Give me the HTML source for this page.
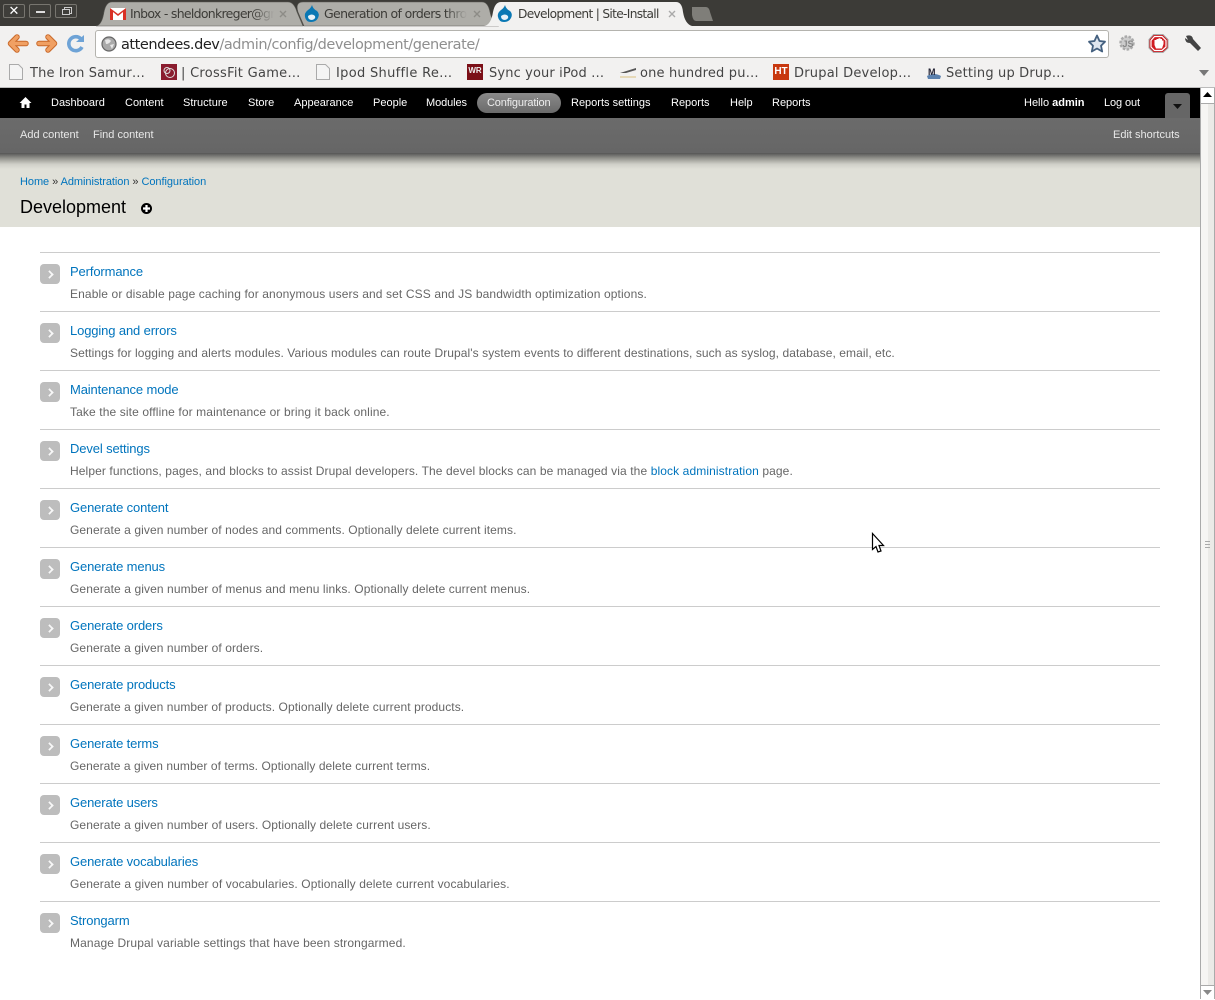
<!DOCTYPE html>
<html><head><meta charset="utf-8"><title>Development | Site-Install</title>
<style>
html,body{margin:0;padding:0;width:1215px;height:1000px;overflow:hidden;background:#fff}
body{position:relative;font-family:"Liberation Sans",sans-serif}
.a{position:absolute;white-space:nowrap}
.u{font-family:"DejaVu Sans",sans-serif;font-size:12.5px;line-height:16px}
.n{color:#fff;font-size:11px;line-height:14px;top:96px}
.s{color:#e8e8e8;font-size:11px;line-height:14px;top:128px}
.bm{top:66px;color:#444;font-size:13px}
.t{font-size:13px;line-height:16px;color:#0074bd;letter-spacing:-.13px}
.d{font-size:12px;line-height:16px;color:#666}
.l{left:40px;width:1120px;height:1px;background:#ccc}
.ic{left:40px;width:20px;height:20px;border-radius:4px;background:#bdbdbd}
.ic:after{content:"";position:absolute;left:5.5px;top:6.5px;width:5px;height:5px;border-top:2px solid #f8f8f8;border-right:2px solid #f8f8f8;transform:rotate(45deg) scale(.85)}
a{color:#0074bd;text-decoration:none}
svg{position:absolute}
.w{top:4px;width:20px;height:12px;border:1px solid #77756f;border-radius:2px;background:#3f3e3a}
.fade{-webkit-mask-image:linear-gradient(90deg,#000 85%,transparent)}
</style></head><body>
<div class="a" style="left:0;top:0;width:1215px;height:26px;background:#3c3b37"></div>
<div class="a" style="left:0;top:26px;width:1215px;height:61px;background:#f2f1f0"></div>
<div class="a" style="left:0;top:87px;width:1215px;height:1px;background:#bbb"></div>

<!-- window buttons -->
<div class="a w" style="left:3px;color:#fff;font:13px/13px 'DejaVu Sans';text-align:center">✕</div>
<div class="a w" style="left:29px"><div class="a" style="left:6px;top:6px;width:9px;height:2px;background:#ddd"></div></div>
<div class="a w" style="left:55px"><div class="a" style="left:8px;top:2px;width:6px;height:5px;border:1px solid #ccc"></div><div class="a" style="left:6px;top:4px;width:6px;height:4px;border:1px solid #ccc;background:#3f3e3a"></div></div>

<!-- tabs -->
<svg style="left:0;top:0" width="740" height="27" viewBox="0 0 740 27">
<path d="M96 26 Q102 25 104 12 Q106 2 112 2 L288 2 Q294 2 297 12 L303 26Z" fill="#aeada8" stroke="#5a5954" stroke-width=".6"/>
<path d="M298 12 Q295 2 303 2 L482 2 Q488 2 490 12 Q492 22 498 26 L304 26Z" fill="#aeada8" stroke="#5a5954" stroke-width=".6"/>
<path d="M484 26 Q491 25 493 12 Q495 2 501 2 L676 2 Q682 2 683 12 Q685 24 692 26Z" fill="#f2f1f0"/>
<path d="M692 7 L706 7 Q709 7 710 12 L713 21 L696 21 Q693 21 692 15Z" fill="#7f7e79"/>
<!-- gmail -->
<rect x="110" y="8" width="16" height="12" fill="#fff"/>
<path d="M110 8 L118 14 L126 8 L126 20 L123 20 L123 12 L118 16 L113 12 L113 20 L110 20Z" fill="#d93025"/>
<!-- drupal drops -->
<path d="M312 5 Q313 9 317 11 Q320 14 318 18 Q316 22 311 22 Q306 22 305 17 Q304 13 308 10 Q311 8 312 5Z" fill="#0a78b4"/>
<path d="M308 16 Q312 13 315 16 Q316 19 312 20 Q308 20 308 16Z" fill="#e8f2f8"/>
<path d="M505 5 Q506 9 510 11 Q513 14 511 18 Q509 22 504 22 Q499 22 498 17 Q497 13 501 10 Q504 8 505 5Z" fill="#0a78b4"/>
<path d="M501 16 Q505 13 508 16 Q509 19 505 20 Q501 20 501 16Z" fill="#e8f2f8"/>
<g stroke="#8d8c87" stroke-width="1.4"><path d="M280 11l6 6m0-6l-6 6M474 11l6 6m0-6l-6 6"/></g>
<path d="M669 11l6 6m0-6l-6 6" stroke="#aaa" stroke-width="1.4"/>
</svg>
<div class="a u fade" style="left:130px;top:6px;width:144px;overflow:hidden;color:#3c3b37;letter-spacing:-.72px">Inbox - sheldonkreger@gn</div>
<div class="a u fade" style="left:324px;top:6px;width:143px;overflow:hidden;color:#3c3b37;letter-spacing:-.65px">Generation of orders thro</div>
<div class="a u" style="left:518px;top:6px;color:#3c3b37;font-size:12.2px;letter-spacing:-.68px">Development | Site-Install</div>

<!-- toolbar icons -->
<svg style="left:0;top:26px" width="95" height="36" viewBox="0 0 95 36">
<g fill="none" stroke-linecap="round" stroke-linejoin="round">
<path d="M26 17.500 H12 M17 11 L10.500 17.500 L17 24 M39 17.500 H53 M48 11 L54.500 17.500 L48 24" stroke="#c9692a" stroke-width="5.500"/>
<path d="M26 17.500 H12 M17 11 L10.500 17.500 L17 24 M39 17.500 H53 M48 11 L54.500 17.500 L48 24" stroke="#f0a063" stroke-width="3.500"/>
</g>
<path d="M81 13 A7 7 0 1 0 82 21" fill="none" stroke="#6ea3d6" stroke-width="3.6"/>
<path d="M76 16 L84 16 L84 9Z" fill="#6ea3d6"/>
</svg>
<div class="a" style="left:95px;top:30px;width:1012px;height:26px;border:1px solid #b4b3ae;border-radius:3px;background:#fff"></div>
<svg style="left:100px;top:35px" width="18" height="18" viewBox="0 0 18 18"><circle cx="9" cy="9" r="7" fill="#aaa" stroke="#666" stroke-width="1.2"/><path d="M5 5 Q9 3 11 6 Q9 9 6 9Z M10 10 L14 9 L12 14Z" fill="#e8e8e8"/></svg>
<div class="a" style="left:121px;top:36px;font:14.5px/18px 'DejaVu Sans',sans-serif;letter-spacing:-.45px;color:#8f8f8f"><span style="color:#222">attendees.dev</span>/admin/config/development/generate/</div>
<svg style="left:1085px;top:31px" width="130" height="26" viewBox="0 0 130 26">
<path d="M12 4.500 L14.500 10 L20 10.700 L16 14.700 L17.200 20.500 L12 17.500 L6.800 20.500 L8 14.700 L4 10.700 L9.500 10Z" fill="#dfe6ef" stroke="#44607f" stroke-width="1.800" stroke-linejoin="round"/>
<circle cx="42" cy="12" r="6.500" fill="#ccc" stroke="#aaa" stroke-width="2.400" stroke-dasharray="2.500 1.500"/>
<text x="37.500" y="16" font-family="Liberation Sans" font-size="9" font-weight="bold" fill="#888">JS</text>
<path d="M68.500 3.500 L78 3.500 L83 8.500 L83 17 L78 21.500 L68.500 21.500 L64 17 L64 8.500Z" fill="#c8161c" stroke="#a9a9a9" stroke-width="1"/>
<path d="M69.500 5.500 L77 5.500 L81 9.500 L81 16 L77 19.500 L69.500 19.500 L66 16 L66 9.500Z" fill="#d01c22" stroke="#fff" stroke-width="1.200"/>
<path d="M69.500 9 V14 L71 17.500 H77 L78.500 13 V9.500 H77 V8 H75.500 V7.300 H73.500 V8 H71.500 V9Z" fill="#fff"/>
<path d="M101 5 Q107 3 108 8 L116 17 L113 20 L105 12 Q100 12 100 7 L103 9Z" fill="#444"/>
</svg>

<!-- bookmarks -->
<svg style="left:8px;top:64px" width="16" height="16" viewBox="0 0 16 16"><path d="M1.500 .5h9l4 4v11h-13z" fill="#f4f4f4" stroke="#aaa"/></svg>
<div class="a u bm" style="left:30px;letter-spacing:.13px">The Iron Samur…</div>
<div class="a" style="left:161px;top:64px;width:16px;height:16px;background:#8a1c2e"></div>
<svg style="left:161px;top:64px" width="16" height="16" viewBox="0 0 16 16"><circle cx="9" cy="9" r="4.500" fill="none" stroke="#ddd"/><circle cx="6" cy="6.500" r="3" fill="none" stroke="#ddd"/></svg>
<div class="a u bm" style="left:181px;letter-spacing:.28px">| CrossFit Game…</div>
<svg style="left:315px;top:64px" width="16" height="16" viewBox="0 0 16 16"><path d="M1.500 .5h9l4 4v11h-13z" fill="#f4f4f4" stroke="#aaa"/></svg>
<div class="a u bm" style="left:336px;letter-spacing:.31px">Ipod Shuffle Re…</div>
<div class="a" style="left:467px;top:64px;width:16px;height:16px;background:#7b0f17;color:#eee;font:bold 8px/14px 'Liberation Sans';text-align:center">WR</div>
<div class="a u bm" style="left:489px;letter-spacing:.13px">Sync your iPod …</div>
<svg style="left:620px;top:64px" width="16" height="16" viewBox="0 0 16 16"><path d="M0 9 L16 4 L16 6 L6 9Z" fill="#555"/><rect x="0" y="12" width="16" height="2" fill="#e6d9b8"/></svg>
<div class="a u bm" style="left:640px;letter-spacing:.17px">one hundred pu…</div>
<div class="a" style="left:773px;top:64px;width:16px;height:16px;background:#c8380f;color:#fff;font:bold 10px/16px 'Liberation Sans';text-align:center">HT</div>
<div class="a u bm" style="left:794px;letter-spacing:.22px">Drupal Develop…</div>
<svg style="left:925px;top:64px" width="18" height="16" viewBox="0 0 18 16"><path d="M2 12 Q9 8 16 12 L15 15 L3 15Z" fill="#5a80ad"/><text x="3" y="11" font-family="Liberation Sans" font-size="9" font-weight="bold" fill="#223">M</text></svg>
<div class="a u bm" style="left:946px;letter-spacing:.17px">Setting up Drup…</div>
<svg style="left:1199px;top:69px" width="10" height="8" viewBox="0 0 10 8"><path d="M0 1H10L5 7Z" fill="#777"/></svg>

<!-- admin toolbar -->
<div class="a" style="left:0;top:88px;width:1200px;height:30px;background:#000"></div>
<div class="a" style="left:0;top:118px;width:1200px;height:35px;background:linear-gradient(#6b6b6b,#666)"></div>
<div class="a" style="left:0;top:153px;width:1200px;height:74px;background:#e0e0d8"></div>
<div class="a" style="left:0;top:153px;width:1200px;height:16px;background:linear-gradient(#555,#8e8e88 30%,#cfcfc8 70%,#e0e0d8)"></div>
<svg style="left:19px;top:96px" width="13" height="13" viewBox="0 0 13 13"><path d="M6.500 1 L12.500 7 L10.500 7 L10.500 12 L7.500 12 L7.500 8.500 L5.500 8.500 L5.500 12 L2.500 12 L2.500 7 L.5 7Z" fill="#fff"/></svg>
<div class="a n" style="left:51px">Dashboard</div>
<div class="a n" style="left:125px">Content</div>
<div class="a n" style="left:183px">Structure</div>
<div class="a n" style="left:248px">Store</div>
<div class="a n" style="left:294px">Appearance</div>
<div class="a n" style="left:373px">People</div>
<div class="a n" style="left:426px;letter-spacing:-.1px">Modules</div>
<div class="a" style="left:477px;top:93px;width:84px;height:20px;border-radius:10px;background:linear-gradient(#8a8a8a,#6a6a6a)"></div>
<div class="a n" style="left:487px;letter-spacing:-.15px;color:#eee">Configuration</div>
<div class="a n" style="left:571px">Reports settings</div>
<div class="a n" style="left:671px">Reports</div>
<div class="a n" style="left:730px">Help</div>
<div class="a n" style="left:772px">Reports</div>
<div class="a n" style="left:1024px">Hello <b>admin</b></div>
<div class="a n" style="left:1104px;letter-spacing:-.1px">Log out</div>
<div class="a" style="left:1165px;top:93px;width:25px;height:25px;border-radius:3px 3px 0 0;background:#666"></div>
<svg style="left:1173px;top:104px" width="10" height="6" viewBox="0 0 10 6"><path d="M0 0H9L4.500 5Z" fill="#111"/></svg>
<div class="a s" style="left:20px">Add content</div>
<div class="a s" style="left:93px">Find content</div>
<div class="a s" style="left:1113px">Edit shortcuts</div>

<!-- header -->
<div class="a" style="left:20px;top:175px;font-size:11px;line-height:14px;color:#333;letter-spacing:-.06px"><a>Home</a> » <a>Administration</a> » <a>Configuration</a></div>
<div class="a" style="left:20px;top:196px;font-size:18px;line-height:22px;color:#000">Development</div>
<svg style="left:141px;top:203px" width="11" height="11" viewBox="0 0 11 11"><circle cx="5.500" cy="5.500" r="5.500" fill="#000"/><path d="M5.500 2v7M2 5.500h7" stroke="#fff" stroke-width="2.200"/></svg>

<!-- list -->
<div class="a l" style="top:252px"></div>
<div class="a ic" style="top:264px"></div>
<div class="a t" style="left:70px;top:264px">Performance</div>
<div class="a d" style="left:70px;top:286px;letter-spacing:.118px">Enable or disable page caching for anonymous users and set CSS and JS bandwidth optimization options.</div>
<div class="a l" style="top:311px"></div>
<div class="a ic" style="top:323px"></div>
<div class="a t" style="left:70px;top:323px">Logging and errors</div>
<div class="a d" style="left:70px;top:345px;letter-spacing:.077px">Settings for logging and alerts modules. Various modules can route Drupal's system events to different destinations, such as syslog, database, email, etc.</div>
<div class="a l" style="top:370px"></div>
<div class="a ic" style="top:382px"></div>
<div class="a t" style="left:70px;top:382px">Maintenance mode</div>
<div class="a d" style="left:70px;top:404px;letter-spacing:.115px">Take the site offline for maintenance or bring it back online.</div>
<div class="a l" style="top:429px"></div>
<div class="a ic" style="top:441px"></div>
<div class="a t" style="left:70px;top:441px">Devel settings</div>
<div class="a d" style="left:70px;top:463px;letter-spacing:.107px">Helper functions, pages, and blocks to assist Drupal developers. The devel blocks can be managed via the <a>block administration</a> page.</div>
<div class="a l" style="top:488px"></div>
<div class="a ic" style="top:500px"></div>
<div class="a t" style="left:70px;top:500px">Generate content</div>
<div class="a d" style="left:70px;top:522px;letter-spacing:.088px">Generate a given number of nodes and comments. Optionally delete current items.</div>
<div class="a l" style="top:547px"></div>
<div class="a ic" style="top:559px"></div>
<div class="a t" style="left:70px;top:559px">Generate menus</div>
<div class="a d" style="left:70px;top:581px;letter-spacing:.098px">Generate a given number of menus and menu links. Optionally delete current menus.</div>
<div class="a l" style="top:606px"></div>
<div class="a ic" style="top:618px"></div>
<div class="a t" style="left:70px;top:618px">Generate orders</div>
<div class="a d" style="left:70px;top:640px;letter-spacing:.09px">Generate a given number of orders.</div>
<div class="a l" style="top:665px"></div>
<div class="a ic" style="top:677px"></div>
<div class="a t" style="left:70px;top:677px">Generate products</div>
<div class="a d" style="left:70px;top:699px;letter-spacing:.083px">Generate a given number of products. Optionally delete current products.</div>
<div class="a l" style="top:724px"></div>
<div class="a ic" style="top:736px"></div>
<div class="a t" style="left:70px;top:736px">Generate terms</div>
<div class="a d" style="left:70px;top:758px;letter-spacing:.06px">Generate a given number of terms. Optionally delete current terms.</div>
<div class="a l" style="top:783px"></div>
<div class="a ic" style="top:795px"></div>
<div class="a t" style="left:70px;top:795px">Generate users</div>
<div class="a d" style="left:70px;top:817px;letter-spacing:.09px">Generate a given number of users. Optionally delete current users.</div>
<div class="a l" style="top:842px"></div>
<div class="a ic" style="top:854px"></div>
<div class="a t" style="left:70px;top:854px">Generate vocabularies</div>
<div class="a d" style="left:70px;top:876px;letter-spacing:.11px">Generate a given number of vocabularies. Optionally delete current vocabularies.</div>
<div class="a l" style="top:901px"></div>
<div class="a ic" style="top:913px"></div>
<div class="a t" style="left:70px;top:913px">Strongarm</div>
<div class="a d" style="left:70px;top:935px;letter-spacing:.118px">Manage Drupal variable settings that have been strongarmed.</div>

<!-- scrollbar -->
<div class="a" style="left:1200px;top:88px;width:13px;height:911px;border-left:1px solid #aaa;border-right:1px solid #aaa;background:linear-gradient(90deg,#f6f5f3 55%,#ebeae7 55%)"></div>
<div class="a" style="left:1201px;top:88px;width:13px;height:15px;background:#fff;border-bottom:1px solid #aaa"></div>
<svg style="left:1203px;top:92px" width="9" height="6" viewBox="0 0 9 6"><path d="M0 5H9L4.500 0Z" fill="#000"/></svg>
<div class="a" style="left:1201px;top:985px;width:13px;height:14px;background:#fff;border-top:1px solid #aaa;border-bottom:1px solid #aaa"></div>
<svg style="left:1203px;top:990px" width="9" height="6" viewBox="0 0 9 6"><path d="M0 0H9L4.500 5Z" fill="#888"/></svg>
<div class="a" style="left:1205px;top:541px;width:5px;height:1px;background:#aaa;box-shadow:0 3px 0 #aaa,0 6px 0 #aaa"></div>

<!-- cursor -->
<svg style="left:870px;top:532px" width="16" height="22" viewBox="0 0 16 22"><path d="M2.500 1.500 L2.500 17.500 L6 14.500 L8 20 L11 19 L9 13.500 L13.500 13.500Z" fill="#fff" stroke="#000" stroke-width="1.200"/></svg>
</body></html>
